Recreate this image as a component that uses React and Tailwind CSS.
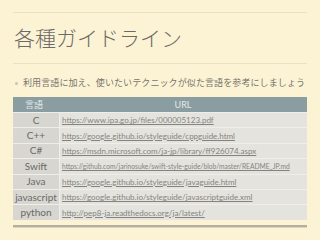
import React from "react";

const rows = [
  ["C", "https://www.ipa.go.jp/files/000005123.pdf", false],
  ["C++", "https://google.github.io/styleguide/cppguide.html", false],
  ["C#", "https://msdn.microsoft.com/ja-jp/library/ff926074.aspx", false],
  ["Swift", "https://github.com/jarinosuke/swift-style-guide/blob/master/README_JP.md", true],
  ["Java", "https://google.github.io/styleguide/javaguide.html", false],
  ["javascript", "https://google.github.io/styleguide/javascriptguide.xml", false],
  ["python", "http://pep8-ja.readthedocs.org/ja/latest/", false],
];

export default function App() {
  return (
    <div
      className="w-[320px] h-[240px] bg-[#fcf3d5] overflow-hidden px-[13px] pt-[12px]"
      style={{ fontFamily: "Lato, 'Noto Sans CJK JP', sans-serif" }}
    >
      <div className="h-px bg-[#ebe1c2]" />
      <div
        className="h-[50px] flex items-center pl-px text-[21px] text-[#6b6a66] font-light"
        style={{ fontFamily: "'Noto Sans CJK JP', sans-serif" }}
      >
        各種ガイドライン
      </div>
      <div className="h-px bg-[#ebe1c2]" />
      <div className="h-[33px] flex items-center pt-[5px] pl-[2px]">
        <span className="w-[3px] h-[3px] rounded-full bg-[#c9c4b4] mr-[5px]" />
        <span
          className="text-[9px] text-[#77756e] tracking-[0.1px] whitespace-nowrap"
          style={{ fontFamily: "'Noto Sans CJK JP', sans-serif" }}
        >
          利用言語に加え、使いたいテクニックが似た言語を参考にしましょう
        </span>
      </div>
      <div className="flex flex-col">
        <div className="flex h-[15px] bg-[#8a9ea2] text-[#e3e8e6] text-[9px]">
          <div
            className="w-[46px] flex items-center pl-[12px]"
            style={{ fontFamily: "'Noto Sans CJK JP', sans-serif" }}
          >
            言語
          </div>
          <div className="flex-1 flex items-center justify-center">URL</div>
        </div>
        {rows.map(([lang, url, small]) => (
          <div key={lang} className="flex h-[15.4px] border-t border-[#efeeea]">
            <div className="w-[46px] bg-[#d7d6d1] flex items-center justify-center text-[10px] font-normal text-[#6a6967]">
              {lang}
            </div>
            <div className="flex-1 bg-[#e4e3de] flex items-center pl-[2px] border-l border-[#efeeea] overflow-hidden">
              <span
                className={
                  (small ? "text-[6.7px] " : "text-[8px] ") +
                  "text-[#858380] underline whitespace-nowrap"
                }
              >
                {url}
              </span>
            </div>
          </div>
        ))}
      </div>
      <div className="mt-[5px] h-[2px] bg-[#b4b09c]" />
      <div className="h-px bg-[#ddd6bc]" />
    </div>
  );
}
